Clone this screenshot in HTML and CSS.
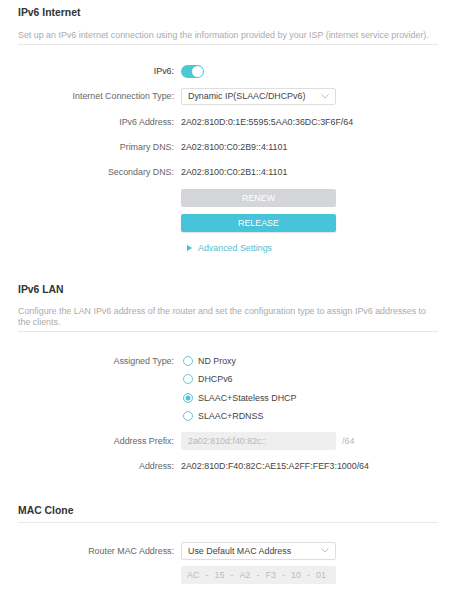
FILE: index.html
```html
<!DOCTYPE html>
<html lang="en">
<head>
<meta charset="utf-8">
<title>IPv6</title>
<link rel="stylesheet" href="styles.css">
</head>
<body>
<div class="page">
  <section class="sec sec-internet">
    <div class="sec-head">
      <h2 class="sec-title">IPv6 Internet</h2>
      <p class="sec-desc">Set up an IPv6 internet connection using the information provided by your ISP (internet service provider).</p>
    </div>
    <div class="form form-internet">
      <div class="row">
        <span class="label label-strong">IPv6:</span>
        <span class="toggle"><span class="knob"></span></span>
      </div>
      <div class="row">
        <span class="label">Internet Connection Type:</span>
        <div class="select">
          <span class="select-text">Dynamic IP(SLAAC/DHCPv6)</span>
          <svg class="chev" width="8" height="5" viewBox="0 0 8 5"><path d="M0.5 0.5 L4 4 L7.5 0.5" fill="none" stroke="#b8b8b8" stroke-width="0.9"/></svg>
        </div>
      </div>
      <div class="row">
        <span class="label">IPv6 Address:</span>
        <span class="value">2A02:810D:0:1E:5595:5AA0:36DC:3F6F/64</span>
      </div>
      <div class="row">
        <span class="label">Primary DNS:</span>
        <span class="value">2A02:8100:C0:2B9::4:1101</span>
      </div>
      <div class="row">
        <span class="label">Secondary DNS:</span>
        <span class="value">2A02:8100:C0:2B1::4:1101</span>
      </div>
      <div class="row">
        <span class="label"></span>
        <button class="btn btn-disabled" type="button">RENEW</button>
      </div>
      <div class="row">
        <span class="label"></span>
        <button class="btn btn-primary" type="button">RELEASE</button>
      </div>
      <div class="row row-adv">
        <span class="label"></span>
        <span class="adv"><span class="adv-tri"></span><span class="adv-text">Advanced Settings</span></span>
      </div>
    </div>
  </section>

  <section class="sec sec-lan">
    <div class="sec-head">
      <h2 class="sec-title">IPv6 LAN</h2>
      <p class="sec-desc">Configure the LAN IPv6 address of the router and set the configuration type to assign IPv6 addresses to the clients.</p>
    </div>
    <div class="form form-lan">
      <div class="row row-radios">
        <span class="label label-top">Assigned Type:</span>
        <div class="radios">
          <label class="radio"><span class="radio-dot"></span><span>ND Proxy</span></label>
          <label class="radio"><span class="radio-dot"></span><span>DHCPv6</span></label>
          <label class="radio"><span class="radio-dot radio-on"></span><span>SLAAC+Stateless DHCP</span></label>
          <label class="radio"><span class="radio-dot"></span><span>SLAAC+RDNSS</span></label>
        </div>
      </div>
      <div class="row">
        <span class="label">Address Prefix:</span>
        <span class="input-dis">2a02:810d:f40:82c::</span>
        <span class="suffix">/64</span>
      </div>
      <div class="row">
        <span class="label">Address:</span>
        <span class="value">2A02:810D:F40:82C:AE15:A2FF:FEF3:1000/64</span>
      </div>
    </div>
  </section>

  <section class="sec sec-mac">
    <div class="sec-head sec-head-plain">
      <h2 class="sec-title">MAC Clone</h2>
    </div>
    <div class="form form-mac">
      <div class="row">
        <span class="label">Router MAC Address:</span>
        <div class="select">
          <span class="select-text">Use Default MAC Address</span>
          <svg class="chev" width="8" height="5" viewBox="0 0 8 5"><path d="M0.5 0.5 L4 4 L7.5 0.5" fill="none" stroke="#b8b8b8" stroke-width="0.9"/></svg>
        </div>
      </div>
      <div class="row row-mac">
        <span class="label"></span>
        <div class="mac">
          <span>AC</span><span>-</span><span>15</span><span>-</span><span>A2</span><span>-</span><span>F3</span><span>-</span><span>10</span><span>-</span><span>01</span>
        </div>
      </div>
    </div>
  </section>
</div>
</body>
</html>
```
FILE: styles.css
```css
* { box-sizing: border-box; }
html, body { margin: 0; padding: 0; background: #fff; }
body {
  font-family: "Liberation Sans", Arial, sans-serif;
  font-size: 8.9px;
  color: #444;
  width: 474px;
  height: 609px;
  overflow: hidden;
}
.page { padding: 0 36px 0 18px; }
.sec-internet { padding-top: 6px; }
.sec-lan { margin-top: 25.7px; }
.sec-mac { margin-top: 29px; }

.sec-head {
  border-bottom: 1px solid #e8e8e8;
  padding-bottom: 4px;
}
.sec-head-plain { padding-bottom: 3.6px; }
.sec-title {
  margin: 0;
  font-size: 10.4px;
  line-height: 14px;
  font-weight: bold;
  color: #333;
}
.sec-desc {
  margin: 9.5px 0 0;
  font-size: 8.9px;
  line-height: 10.5px;
  color: #ababab;
}

.form-internet { margin-top: 17px; }
.form-lan { margin-top: 19.6px; }
.form-mac { margin-top: 18.7px; }

.row {
  display: flex;
  align-items: center;
  height: 18px;
  margin-bottom: 7.33px;
}
.row-adv { margin-top: 1.67px; }
.row-mac { margin-top: -1.3px; }
.label {
  width: 156px;
  flex: none;
  text-align: right;
  color: #666;
  margin-right: 7px;
}
.label-strong { color: #333; }
.value { color: #444; white-space: nowrap; }

.toggle {
  width: 23px;
  height: 13px;
  border-radius: 7px;
  background: #4cc7d4;
  display: flex;
  align-items: center;
  justify-content: flex-end;
  padding-right: 1px;
}
.knob {
  width: 11px;
  height: 11px;
  border-radius: 50%;
  background: #fff;
}

.select {
  width: 155px;
  height: 17.5px;
  border: 1px solid #dedede;
  border-radius: 2px;
  display: flex;
  align-items: center;
  justify-content: space-between;
  padding: 0 6px 0 6px;
  color: #444;
}
.chev { display: block; }

.btn {
  width: 155px;
  height: 18px;
  border: 0;
  border-radius: 2px;
  color: #fff;
  font-family: inherit;
  font-size: 8.9px;
  padding: 0;
}
.btn-disabled { background: #d4d5d8; }
.btn-primary { background: #47c3da; box-shadow: 0 1px 1.5px rgba(0, 0, 0, 0.12); }

.adv { display: flex; align-items: center; padding-left: 6px; }
.adv-tri {
  width: 0;
  height: 0;
  border-top: 3px solid transparent;
  border-bottom: 3px solid transparent;
  border-left: 5px solid #47bfd3;
  margin-right: 6px;
}
.adv-text { color: #55bdd2; }

.row-radios { height: auto; align-items: flex-start; }
.label-top { line-height: 18.2px; }
.radios { display: flex; flex-direction: column; }
.radio {
  height: 18.2px;
  display: flex;
  align-items: center;
  color: #444;
  padding-left: 2px;
}
.radio-dot {
  width: 10px;
  height: 10px;
  border-radius: 50%;
  border: 1px solid #69c9d5;
  margin-right: 5px;
  background: #fff;
  flex: none;
}
.radio-on {
  background: #4ec4d5;
  box-shadow: inset 0 0 0 1.5px #fff;
}

.input-dis {
  width: 155px;
  height: 17.5px;
  background: #efefef;
  border-radius: 2px;
  color: #b8b8b8;
  display: flex;
  align-items: center;
  padding-left: 7px;
}
.suffix { color: #b8b8b8; margin-left: 6px; }

.mac {
  width: 155px;
  height: 18px;
  background: #efefef;
  border-radius: 2px;
  color: #bbb;
  display: flex;
  align-items: center;
  justify-content: space-between;
  padding: 0 10px 0 6px;
}
```
